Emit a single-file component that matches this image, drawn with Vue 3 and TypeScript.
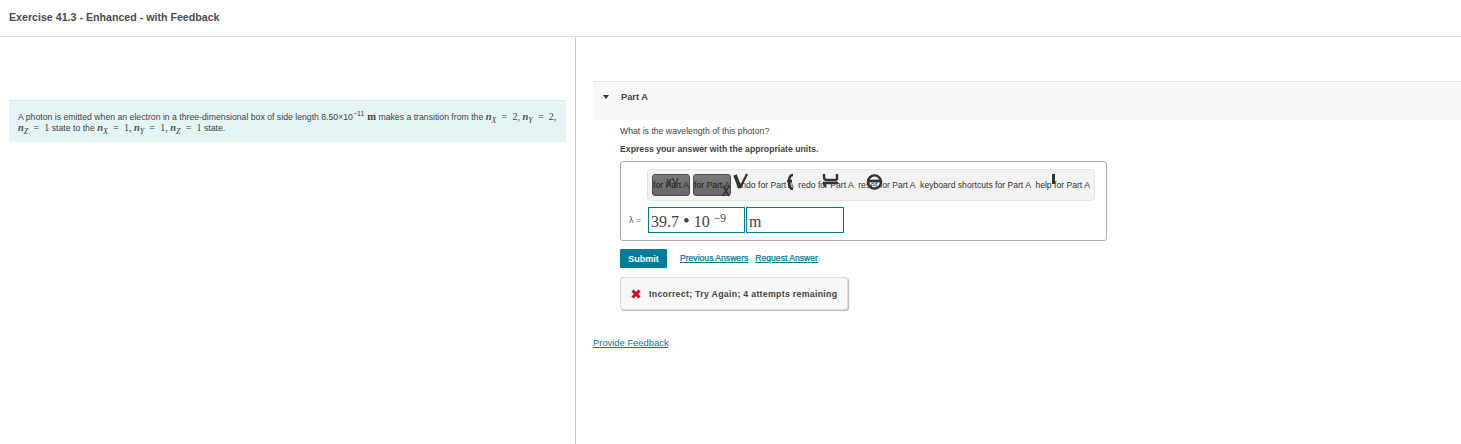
<script setup lang="ts">
interface Tool { label: string; cls: string }
const tools: Tool[] = [
  { label: 'for Part A', cls: 'boxed first' },
  { label: 'for Part A', cls: 'boxed second' },
  { label: 'undo for Part A', cls: '' },
  { label: 'redo for Part A', cls: '' },
  { label: 'reset for Part A', cls: '' },
  { label: 'keyboard shortcuts for Part A', cls: '' },
  { label: 'help for Part A', cls: '' },
]
</script>

<template>
  <div class="page">
    <header class="top">Exercise 41.3 - Enhanced - with Feedback</header>
    <div class="panes">
      <section class="left">
        <div class="info">
          A photon is emitted when an electron in a three-dimensional box of side length 8.50×10<sup class="tiny">−11</sup>
          <span class="m unit-m">m</span> makes a transition from the
          <span class="m"><b>n</b><sub>X</sub><i class="eq">=</i>2, <b>n</b><sub>Y</sub><i class="eq">=</i>2,</span><br />
          <span class="m"><b>n</b><sub>Z</sub><i class="eq">=</i>1</span> state to the
          <span class="m"><b>n</b><sub>X</sub><i class="eq">=</i>1, <b>n</b><sub>Y</sub><i class="eq">=</i>1, <b>n</b><sub>Z</sub><i class="eq">=</i>1</span> state.
        </div>
      </section>
      <section class="right">
        <div class="part-head"><span class="caret"></span><span>Part A</span></div>
        <div class="part-body">
          <p class="q">What is the wavelength of this photon?</p>
          <p class="express">Express your answer with the appropriate units.</p>
          <div class="answer">
            <div class="toolbar">
              <span v-for="(t, i) in tools" :key="i" class="tool" :class="t.cls">{{ t.label }}</span>
              <svg class="glyphs" width="448" height="32" viewBox="0 0 448 32">
                <g fill="none" stroke="#333">
                  <path d="M20 10l4 8M24 10l-4 8M25 9l3 5M31 9l-4 10" stroke-width="1.2" />
                  <path d="M76 17l6 10M82 17l-6 10" stroke-width="1.6" />
                  <path d="M88 6l5 13" stroke-width="3.6" />
                  <path d="M93 19l7-14" stroke-width="2.2" />
                  <path d="M146 6c-3 0-4 3-4 7s1 7 4 7M140 12h5" stroke-width="2.6" />
                  <path d="M177 5v3c0 2 1 3 3 3h10M190 5v6M179 17c-2 0-2-1-2-3h14" stroke-width="2.4" />
                  <circle cx="227.5" cy="13" r="6.6" stroke-width="2.4" />
                  <path d="M221 12h13" stroke-width="2.8" />
                  <path d="M406.5 5v10" stroke-width="3" />
                </g>
              </svg>
            </div>
            <div class="entry">
              <span class="lambda">λ =</span>
              <div class="field value">39.7 <span class="dot">•</span> 10<sup>−9</sup></div>
              <div class="field unit">m</div>
            </div>
          </div>
          <div class="actions">
            <button class="submit" type="button">Submit</button>
            <a class="link act">Previous Answers</a>
            <a class="link act">Request Answer</a>
          </div>
          <div class="feedback">
            <svg class="x" width="10" height="10" viewBox="0 0 10 10"><path d="M1.5 1.5l7 7M8.5 1.5l-7 7" stroke="#d6002a" stroke-width="3" /></svg>
            <span>Incorrect; Try Again; 4 attempts remaining</span>
          </div>
        </div>
        <a class="link provide">Provide Feedback</a>
      </section>
    </div>
  </div>
</template>

<style>
html, body { margin: 0; background: #fff; }
</style>

<style scoped>
.page { width: 1461px; height: 444px; overflow: hidden; font-family: "Liberation Sans", Arial, sans-serif; color: #333; display: flex; flex-direction: column; }
.top { box-sizing: border-box; padding: 11px 0 0 9px; font-size: 10.65px; font-weight: bold; line-height: 13px; color: #4a4a4a; border-bottom: 1px solid #e0e0e0; flex: none; height: 37px; }
.panes { flex: 1; display: flex; }
.left { width: 576px; box-sizing: border-box; border-right: 1px solid #ccc; padding: 63px 9px 0 9px; flex: none; }
.info { width: 557px; box-sizing: border-box; height: 42px; background: #e5f5f5; border-top: 1px solid #dde6ea; padding: 11px 0 0 9px; font-size: 8.7px; line-height: 11px; color: #444; white-space: nowrap; }
.m { font-family: "Liberation Serif", serif; font-size: 10px; line-height: 1; }
.m b { font-style: italic; font-weight: bold; font-size: 10.5px; color: #555; }
.m sub { font-size: 8px; line-height: 0; font-style: italic; }
.eq { font-style: normal; margin: 0 5.2px; }
.unit-m { font-weight: bold; font-size: 10.5px; margin-left: 3px; }
sup.tiny { font-size: 7px; line-height: 0; }
.right { flex: 1; padding: 44px 0 0 17px; min-width: 0; }
.part-head { height: 39px; box-sizing: border-box; border-top: 1px solid #e3e3e3; background: #f8f8f8; display: flex; align-items: center; font-size: 9.3px; font-weight: bold; color: #444; padding: 0 0 8px 10px; gap: 12px; }
.caret { width: 0; height: 0; border-left: 3.5px solid transparent; border-right: 3.5px solid transparent; border-top: 4px solid #333; }
.part-body { padding: 0 0 0 27px; }
.q { margin: 5px 0 0; font-size: 8.7px; line-height: 12px; color: #444; }
.express { margin: 6px 0 0; font-size: 8.7px; line-height: 12px; font-weight: bold; color: #444; }
.answer { width: 487px; height: 80px; box-sizing: border-box; margin-top: 6px; border: 1px solid #aaa; border-radius: 3px; padding: 7px 0 0 26px; background: #fff; }
.toolbar { position: relative; width: 448px; height: 32px; box-sizing: border-box; background: #f3f3f3; border: 1px solid #e4e4e4; border-radius: 4px; display: flex; align-items: center; padding-left: 4px; font-size: 8.6px; color: #333; white-space: nowrap; gap: 4.5px; }
.tool { display: block; }
.tool.boxed { width: 38px; height: 22px; box-sizing: border-box; background: linear-gradient(#7a7a7a, #666); border: 1px solid #4a4a4a; border-radius: 3px; line-height: 20px; overflow: hidden; text-align: center; color: #222; }
.tool.first { margin-right: -1.5px; }
.tool.second { margin-right: 1px; }
.glyphs { position: absolute; left: -1px; top: -1px; }
.entry { display: flex; align-items: center; margin: 6px 0 0 -26px; }
.lambda { width: 27px; font-size: 9px; color: #555; padding-left: 8px; box-sizing: border-box; white-space: nowrap; }
.field { height: 26px; box-sizing: border-box; border: 1px solid #007c9a; font-family: "Liberation Serif", serif; font-size: 16px; line-height: 28px; color: #444; padding-left: 2px; }
.field sup { font-size: 11.5px; line-height: 0; margin-left: 4px; vertical-align: 5.5px; }
.dot { font-size: 19px; line-height: 0; }
.value { width: 97px; }
.unit { width: 98px; margin-left: 1px; }
.actions { display: flex; align-items: center; margin-top: 8px; }
.submit { width: 47px; height: 19px; padding: 0; border: 0; border-radius: 1px; background: #007c9a; color: #fff; font: bold 9px "Liberation Sans", Arial, sans-serif; margin-right: 13px; }
.link { color: #007c9a; text-decoration: underline; font-size: 8.6px; }
.act { margin: 0 7px 2px 0; -webkit-text-stroke: 0.25px #007c9a; }
.feedback { margin-top: 9px; width: 228px; height: 33px; box-sizing: border-box; border: 1px solid #ddd; border-radius: 3px; background: #f8f8f8; box-shadow: 1px 1px 1px #bbb; display: flex; align-items: center; padding-left: 10px; gap: 8px; font-size: 8.8px; font-weight: bold; letter-spacing: 0.28px; color: #444; }
.x { flex: none; }
.provide { display: block; margin-top: 27px; font-size: 9.4px; width: max-content; }
</style>
